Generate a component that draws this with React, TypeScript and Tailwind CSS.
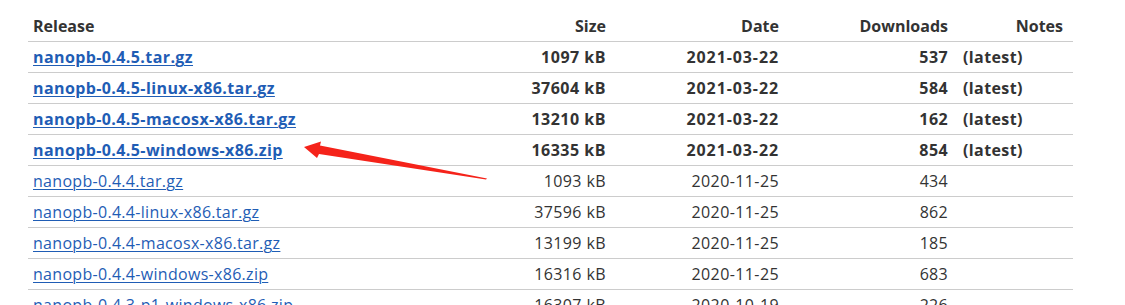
import React from "react";

type Row = { name: string; size: string; date: string; dl: string; note: string; bold: boolean };

const rows: Row[] = [
  { name: "nanopb-0.4.5.tar.gz", size: "1097 kB", date: "2021-03-22", dl: "537", note: "(latest)", bold: true },
  { name: "nanopb-0.4.5-linux-x86.tar.gz", size: "37604 kB", date: "2021-03-22", dl: "584", note: "(latest)", bold: true },
  { name: "nanopb-0.4.5-macosx-x86.tar.gz", size: "13210 kB", date: "2021-03-22", dl: "162", note: "(latest)", bold: true },
  { name: "nanopb-0.4.5-windows-x86.zip", size: "16335 kB", date: "2021-03-22", dl: "854", note: "(latest)", bold: true },
  { name: "nanopb-0.4.4.tar.gz", size: "1093 kB", date: "2020-11-25", dl: "434", note: "", bold: false },
  { name: "nanopb-0.4.4-linux-x86.tar.gz", size: "37596 kB", date: "2020-11-25", dl: "862", note: "", bold: false },
  { name: "nanopb-0.4.4-macosx-x86.tar.gz", size: "13199 kB", date: "2020-11-25", dl: "185", note: "", bold: false },
  { name: "nanopb-0.4.4-windows-x86.zip", size: "16316 kB", date: "2020-11-25", dl: "683", note: "", bold: false },
  { name: "nanopb-0.4.3-p1-windows-x86.zip", size: "16307 kB", date: "2020-10-19", dl: "226", note: "", bold: false },
];

export default function App() {
  return (
    <div
      className="relative w-[1125px] h-[305px] overflow-hidden bg-white text-[16px] leading-[24px] text-[#333333]"
      style={{ fontFamily: '"Open Sans", "Noto Sans", "Liberation Sans", sans-serif' }}
    >
      <div className="ml-[28px] w-[1045px]">
        <div className="grid grid-cols-[428px_160px_173px_169px_115px] h-[42px] border-b border-[#cccccc] pt-[14px] font-bold">
          <div className="pl-[5px]">Release</div>
          <div className="text-right pr-[10px]">Size</div>
          <div className="text-right pr-[10px]">Date</div>
          <div className="text-right pr-[10px]">Downloads</div>
          <div className="text-right pr-[10px]">Notes</div>
        </div>
        {rows.map((r) => (
          <div
            key={r.name}
            className={
              "grid grid-cols-[428px_160px_173px_169px_115px] h-[31px] border-b border-[#cccccc] items-center " +
              (r.bold ? "font-bold tracking-[0.4px]" : "font-normal tracking-[0.3px]")
            }
          >
            <div className="pl-[5px]">
              <a href="#" className="text-[#1f5db5] underline underline-offset-[2px] decoration-[1px]">
                {r.name}
              </a>
            </div>
            <div className={"text-right " + (r.bold ? "pr-[10px] tracking-[0.5px]" : "pr-[10px] tracking-[0.4px]")}>{r.size}</div>
            <div className={"text-right " + (r.bold ? "pr-[10px] tracking-[0.9px]" : "pr-[10px] tracking-[0.4px]")}>{r.date}</div>
            <div className="text-right pr-[10px]">{r.dl}</div>
            <div className="pl-[5px]">{r.note}</div>
          </div>
        ))}
      </div>
      <svg
        className="absolute left-0 top-0 pointer-events-none"
        width="1125"
        height="305"
        viewBox="0 0 1125 305"
      >
        <polygon
          points="304,147 321,141.5 320,145.5 487,178.5 486,179.5 319,154 317,158"
          fill="#f5231a"
        />
      </svg>
    </div>
  );
}
